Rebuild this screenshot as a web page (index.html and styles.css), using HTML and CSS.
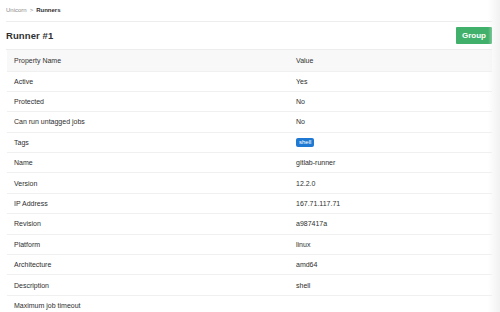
FILE: index.html
```html
<!doctype html>
<html>
<head>
	<meta charset="utf-8">
	<title>Runner #1 - Runners - Unicorn</title>
	<link rel="stylesheet" href="styles.css">
</head>
<body>
	<div class="crumbs">
		<a href="#">Unicorn</a><span class="sep">&gt;</span><strong>Runners</strong>
	</div>
	<div class="head">
		<h1>Runner #1</h1>
		<a href="#" class="btn">Group</a>
	</div>
	<table class="props">
		<thead>
			<tr><th>Property Name</th><th>Value</th></tr>
		</thead>
		<tbody>
			<tr><td>Active</td><td>Yes</td></tr>
			<tr><td>Protected</td><td>No</td></tr>
			<tr><td>Can run untagged jobs</td><td>No</td></tr>
			<tr><td>Tags</td><td><span class="tag">shell</span></td></tr>
			<tr><td>Name</td><td>gitlab-runner</td></tr>
			<tr><td>Version</td><td>12.2.0</td></tr>
			<tr><td>IP Address</td><td>167.71.117.71</td></tr>
			<tr><td>Revision</td><td>a987417a</td></tr>
			<tr><td>Platform</td><td>linux</td></tr>
			<tr><td>Architecture</td><td>amd64</td></tr>
			<tr><td>Description</td><td>shell</td></tr>
			<tr><td>Maximum job timeout</td><td></td></tr>
		</tbody>
	</table>
	<div class="fade"></div>
</body>
</html>
```
FILE: styles.css
```css
* {margin:0; padding:0; box-sizing:border-box;}
body {font:7px "Liberation Sans", Arial, sans-serif; color:#2e2e2e; background:#fff; padding:0 8px 0 6px; overflow:hidden; height:312px;}
a {color:inherit; text-decoration:none;}

.crumbs {height:22px; line-height:21px; font-size:6px; color:#8a8a8a; border-bottom:1px solid #ededed;}
.crumbs .sep {margin:0 3px;}
.crumbs strong {color:#2e2e2e; font-weight:bold;}

.head {display:flex; align-items:center; justify-content:space-between; height:28px; border-bottom:1px solid #ededed;}
.head h1 {font-size:9.5px; font-weight:bold; color:#303030; letter-spacing:0.1px;}
.btn {display:block; background:#40b06a; color:#fff; font-weight:bold; font-size:8px; padding:0 6px; height:17px; line-height:17px; border-radius:1px;}

.props {width:calc(100% - 1px); margin-left:1px; border-collapse:collapse;}
.props th, .props td {text-align:left; font-weight:normal; height:20.4px; padding:0 7px; border-bottom:1px solid #f0f0f0; vertical-align:middle;}
.props th {background:#f8f8f8; color:#333; height:21px;}
.props th:first-child, .props td:first-child {width:282px;}
.props td {color:#2e2e2e;}
.tag {display:inline-block; background:#1f78d1; color:#fff; font-size:6px; padding:0 3px; height:9px; line-height:9px; border-radius:2px;}

.fade {position:absolute; top:0; right:0; width:12px; height:312px; background:linear-gradient(to right, rgba(240,240,240,0), #f1f1f1);}
```
